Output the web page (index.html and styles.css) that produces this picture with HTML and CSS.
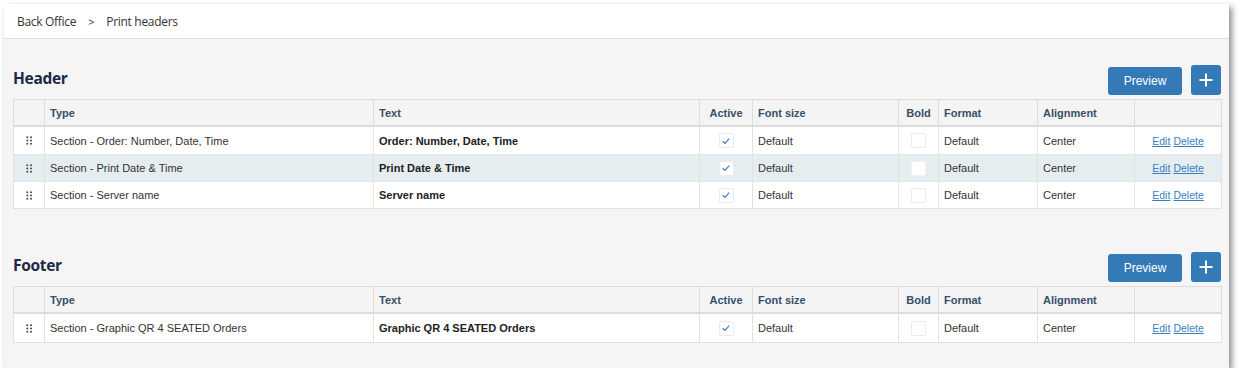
FILE: index.html
```html
<!DOCTYPE html>
<html>
<head>
<meta charset="utf-8">
<link rel="stylesheet" href="styles.css">
</head>
<body>
<div class="window">
  <div class="topbar">
    <span class="crumb">Back Office</span>
    <span class="sep">&gt;</span>
    <span class="crumb">Print headers</span>
  </div>
  <div class="content">
    <section class="section">
      <div class="section-head">
        <h2 class="title">Header</h2>
        <div class="actions">
          <button class="btn btn-preview">Preview</button>
          <button class="btn btn-add"><svg width="16" height="16" viewBox="0 0 16 16"><path d="M8 1.5v13M1.5 8h13" stroke="#fff" stroke-width="2" fill="none"/></svg></button>
        </div>
      </div>
      <table class="grid">
        <colgroup>
          <col class="c-drag"><col class="c-type"><col class="c-text"><col class="c-active"><col class="c-size"><col class="c-bold"><col class="c-format"><col class="c-align"><col class="c-act">
        </colgroup>
        <thead>
          <tr><th></th><th>Type</th><th>Text</th><th class="center">Active</th><th>Font size</th><th class="center">Bold</th><th>Format</th><th>Alignment</th><th></th></tr>
        </thead>
        <tbody>
          <tr class="r1">
            <td class="center"><svg class="drag" width="7" height="9" viewBox="0 0 7 9"><circle cx="1.3" cy="1.3" r="1"/><circle cx="5" cy="1.3" r="1"/><circle cx="1.3" cy="4.5" r="1"/><circle cx="5" cy="4.5" r="1"/><circle cx="1.3" cy="7.7" r="1"/><circle cx="5" cy="7.7" r="1"/></svg></td>
            <td>Section - Order: Number, Date, Time</td>
            <td class="bold">Order: Number, Date, Time</td>
            <td class="center"><span class="cb"><svg width="10" height="10" viewBox="0 0 10 10"><path d="M1.8 5.2l2.2 2.1 4.2-4.6" stroke="#3b7fc0" stroke-width="1.2" fill="none"/></svg></span></td>
            <td>Default</td>
            <td class="center"><span class="cb"></span></td>
            <td>Default</td>
            <td>Center</td>
            <td class="center"><a class="lnk">Edit</a> <a class="lnk">Delete</a></td>
          </tr>
          <tr class="alt">
            <td class="center"><svg class="drag" width="7" height="9" viewBox="0 0 7 9"><circle cx="1.3" cy="1.3" r="1"/><circle cx="5" cy="1.3" r="1"/><circle cx="1.3" cy="4.5" r="1"/><circle cx="5" cy="4.5" r="1"/><circle cx="1.3" cy="7.7" r="1"/><circle cx="5" cy="7.7" r="1"/></svg></td>
            <td>Section - Print Date &amp; Time</td>
            <td class="bold">Print Date &amp; Time</td>
            <td class="center"><span class="cb"><svg width="10" height="10" viewBox="0 0 10 10"><path d="M1.8 5.2l2.2 2.1 4.2-4.6" stroke="#3b7fc0" stroke-width="1.2" fill="none"/></svg></span></td>
            <td>Default</td>
            <td class="center"><span class="cb cb-strong"></span></td>
            <td>Default</td>
            <td>Center</td>
            <td class="center"><a class="lnk">Edit</a> <a class="lnk">Delete</a></td>
          </tr>
          <tr>
            <td class="center"><svg class="drag" width="7" height="9" viewBox="0 0 7 9"><circle cx="1.3" cy="1.3" r="1"/><circle cx="5" cy="1.3" r="1"/><circle cx="1.3" cy="4.5" r="1"/><circle cx="5" cy="4.5" r="1"/><circle cx="1.3" cy="7.7" r="1"/><circle cx="5" cy="7.7" r="1"/></svg></td>
            <td>Section - Server name</td>
            <td class="bold">Server name</td>
            <td class="center"><span class="cb"><svg width="10" height="10" viewBox="0 0 10 10"><path d="M1.8 5.2l2.2 2.1 4.2-4.6" stroke="#3b7fc0" stroke-width="1.2" fill="none"/></svg></span></td>
            <td>Default</td>
            <td class="center"><span class="cb"></span></td>
            <td>Default</td>
            <td>Center</td>
            <td class="center"><a class="lnk">Edit</a> <a class="lnk">Delete</a></td>
          </tr>
        </tbody>
      </table>
    </section>

    <section class="section footer-section">
      <div class="section-head">
        <h2 class="title">Footer</h2>
        <div class="actions">
          <button class="btn btn-preview">Preview</button>
          <button class="btn btn-add"><svg width="16" height="16" viewBox="0 0 16 16"><path d="M8 1.5v13M1.5 8h13" stroke="#fff" stroke-width="2" fill="none"/></svg></button>
        </div>
      </div>
      <table class="grid">
        <colgroup>
          <col class="c-drag"><col class="c-type"><col class="c-text"><col class="c-active"><col class="c-size"><col class="c-bold"><col class="c-format"><col class="c-align"><col class="c-act">
        </colgroup>
        <thead>
          <tr><th></th><th>Type</th><th>Text</th><th class="center">Active</th><th>Font size</th><th class="center">Bold</th><th>Format</th><th>Alignment</th><th></th></tr>
        </thead>
        <tbody>
          <tr class="tall">
            <td class="center"><svg class="drag" width="7" height="9" viewBox="0 0 7 9"><circle cx="1.3" cy="1.3" r="1"/><circle cx="5" cy="1.3" r="1"/><circle cx="1.3" cy="4.5" r="1"/><circle cx="5" cy="4.5" r="1"/><circle cx="1.3" cy="7.7" r="1"/><circle cx="5" cy="7.7" r="1"/></svg></td>
            <td>Section - Graphic QR 4 SEATED Orders</td>
            <td class="bold">Graphic QR 4 SEATED Orders</td>
            <td class="center"><span class="cb"><svg width="10" height="10" viewBox="0 0 10 10"><path d="M1.8 5.2l2.2 2.1 4.2-4.6" stroke="#3b7fc0" stroke-width="1.2" fill="none"/></svg></span></td>
            <td>Default</td>
            <td class="center"><span class="cb"></span></td>
            <td>Default</td>
            <td>Center</td>
            <td class="center"><a class="lnk">Edit</a> <a class="lnk">Delete</a></td>
          </tr>
        </tbody>
      </table>
    </section>
  </div>
</div>
</body>
</html>
```

FILE: styles.css
```css
html, body {
  margin: 0;
  padding: 0;
  background: #ffffff;
}
body {
  font-family: "Liberation Sans", Arial, sans-serif;
}
.window {
  margin: 4px 0 0 4px;
  width: 1225px;
  height: 364px;
  background: #f5f5f5;
  box-shadow: 3px 3px 6px rgba(0, 0, 0, 0.45);
  display: flex;
  flex-direction: column;
}
.topbar {
  padding-top: 1px;
  box-sizing: border-box;
  height: 35px;
  background: #ffffff;
  border-bottom: 1px solid #dedede;
  display: flex;
  align-items: center;
  padding-left: 13px;
  font-family: "Open Sans", sans-serif;
  font-size: 12px;
  color: #333;
  letter-spacing: -0.3px;
}
.sep {
  margin: 0 12px 0 12px;
  font-size: 11px;
}
.content {
  padding: 26px 8px 0 9px;
}
.section-head {
  display: flex;
  justify-content: space-between;
  align-items: center;
  margin-bottom: 4px;
}
.title {
  margin: 0 0 5px 0;
  font-family: "Open Sans", sans-serif;
  font-weight: 700;
  font-size: 15.5px;
  letter-spacing: -0.3px;
  color: #1d2a46;
}
.actions {
  display: flex;
  align-items: flex-end;
  gap: 9px;
}
.btn {
  background: #337ab7;
  border: none;
  border-radius: 3px;
  color: #fff;
  font-family: "Liberation Sans", Arial, sans-serif;
  padding: 0;
  display: flex;
  align-items: center;
  justify-content: center;
}
.btn-preview {
  width: 74px;
  height: 28px;
  font-size: 12px;
}
.btn-add {
  width: 30px;
  height: 30px;
}
.footer-section {
  margin-top: 43px;
}
.grid {
  width: 1208px;
  table-layout: fixed;
  border-collapse: collapse;
  border: 1px solid #dcdcdc;
  font-size: 11px;
  color: #333;
}
.c-drag { width: 31px; }
.c-type { width: 329px; }
.c-text { width: 326px; }
.c-active { width: 53px; }
.c-size { width: 146px; }
.c-bold { width: 40px; }
.c-format { width: 99px; }
.c-align { width: 97px; }
.c-act { width: 87px; }
.grid th {
  background: #f4f4f4;
  color: #34506b;
  font-weight: 700;
  text-align: left;
  height: 25px;
  padding: 0 6px 0 5px;
  border: 1px solid #dcdcdc;
  border-bottom: 2px solid #dcdcdc;
}
.grid td {
  background: #ffffff;
  height: 26px;
  padding: 0 6px 0 5px;
  border: 1px solid #e2e2e2;
  white-space: nowrap;
}
.grid tr.r1 td {
  height: 27px;
}
.grid tr.alt td {
  background: #e6edf1;
}
.grid tr.tall td {
  height: 28px;
}
.grid .center {
  text-align: center;
  padding: 0;
}
.grid .bold {
  font-weight: 700;
  color: #222;
}
.drag {
  display: block;
  margin: 0 auto;
  fill: #4a4a4a;
}
.cb {
  display: inline-flex;
  align-items: center;
  justify-content: center;
  width: 13px;
  height: 13px;
  background: #fff;
  border: 1px solid #ececec;
  border-radius: 2px;
  vertical-align: middle;
}
.cb-strong {
  border-color: #f2f2f2;
}
.lnk {
  color: #3a7fc1;
  text-decoration: underline;
  font-size: 10.5px;
  cursor: pointer;
}
```
